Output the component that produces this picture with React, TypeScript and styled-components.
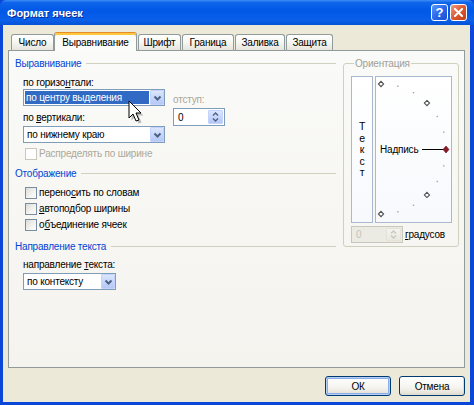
import React from 'react';
import styled, { createGlobalStyle, css } from 'styled-components';

const Global = createGlobalStyle`
  html, body { margin: 0; padding: 0; width: 474px; height: 405px; overflow: hidden; background: #0A46D8; }
  body { font-family: "Liberation Sans", Arial, sans-serif; font-size: 10px; }
  * { box-sizing: border-box; }
`;

const Window = styled.div`
  position: relative;
  width: 474px;
  height: 405px;
  display: flex;
  flex-direction: column;
  background: #0A46D8;
  font-family: "Liberation Sans", Arial, sans-serif;
  font-size: 10px;
  letter-spacing: -0.2px;
  color: #000;
`;

const TitleBar = styled.div`
  height: 25px;
  flex: none;
  display: flex;
  align-items: center;
  padding: 0 7px 0 7px;
  border-radius: 6px 6px 0 0;
  background: linear-gradient(to bottom, #3D8DF5 0%, #1066EA 10%, #0058E6 40%, #0A5FE9 80%, #0452D6 100%);
`;

const Title = styled.div`
  flex: 1;
  color: #fff;
  font-weight: bold;
  font-size: 11px;
  letter-spacing: 0;
  text-shadow: 1px 1px 0 #0C2A9A;
`;

const CapButton = styled.div<{ $kind: 'help' | 'close' }>`
  width: 17px;
  height: 17px;
  margin-left: 2px;
  border: 1px solid #fff;
  border-radius: 3px;
  display: flex;
  align-items: center;
  justify-content: center;
  color: #fff;
  font-weight: bold;
  font-size: 13px;
  letter-spacing: 0;
  ${(p) =>
    p.$kind === 'help'
      ? css`background: linear-gradient(135deg, #5C9AF8 0%, #2A67EC 50%, #1B4FD0 100%);`
      : css`background: linear-gradient(135deg, #EE9B80 0%, #DE5A32 50%, #C23C17 100%);`}
`;

const Body = styled.div`
  flex: 1;
  margin: 0 4px 3px 3px;
  background: #ECE9D8;
  padding: 7px 5px 6px 5px;
  display: flex;
  flex-direction: column;
`;

const TabStrip = styled.div`
  height: 18px;
  flex: none;
  display: flex;
  align-items: flex-end;
  gap: 1px;
  padding-left: 3px;
  position: relative;
  z-index: 1;
`;

const Tab = styled.div<{ $w: number; $active?: boolean }>`
  width: ${(p) => p.$w}px;
  height: 16px;
  border: 1px solid #919B9C;
  border-bottom: none;
  border-radius: 3px 3px 0 0;
  display: flex;
  align-items: center;
  justify-content: center;
  background: linear-gradient(to bottom, #FFFFFF 0%, #F6F6F2 50%, #E6E4DC 100%);
  white-space: nowrap;
  ${(p) =>
    p.$active &&
    css`
      height: 19px;
      margin-bottom: -1px;
      margin-left: -1px;
      border-top: 1px solid #E68B2C;
      box-shadow: inset 0 2px 0 #FFC73C;
      background: #FBFBF9;
      padding-top: 1px;
    `}
`;

const Panel = styled.div`
  height: 318px;
  flex: none;
  border: 1px solid #919B9C;
  background: linear-gradient(to bottom, #FAFAF8 0%, #F4F3EE 100%);
  padding: 6px 0 0 6px;
  display: flex;
  align-items: flex-start;
`;

const LeftCol = styled.div`
  width: 321px;
  display: flex;
  flex-direction: column;
`;

const GroupHeader = styled.div<{ $mt?: number }>`
  display: flex;
  align-items: center;
  height: 13px;
  margin-top: ${(p) => p.$mt ?? 0}px;
  color: #0046D5;
  white-space: nowrap;
  &::after {
    content: '';
    flex: 1;
    height: 1px;
    margin-left: 5px;
    background: #D0D0BF;
  }
`;

const Indent = styled.div`
  margin-left: 8px;
  display: flex;
  flex-direction: column;
`;

const FieldLabel = styled.div<{ $mt?: number; $disabled?: boolean }>`
  height: 13px;
  line-height: 13px;
  margin-top: ${(p) => p.$mt ?? 0}px;
  color: ${(p) => (p.$disabled ? '#ACA899' : '#000')};
  white-space: nowrap;
`;

const U = styled.span`
  text-decoration: underline;
`;

const HAlignRow = styled.div`
  margin-top: 6px;
  display: flex;
  align-items: flex-start;
`;

const Column = styled.div<{ $pt?: number; $ml?: number }>`
  display: flex;
  flex-direction: column;
  padding-top: ${(p) => p.$pt ?? 0}px;
  margin-left: ${(p) => p.$ml ?? 0}px;
`;

const Combo = styled.div<{ $w: number; $mt?: number }>`
  width: ${(p) => p.$w}px;
  height: 17px;
  margin-top: ${(p) => p.$mt ?? 0}px;
  border: 1px solid #7F9DB9;
  background: #fff;
  display: flex;
`;

const ComboValue = styled.div`
  flex: 1;
  padding: 1px;
  display: flex;
  min-width: 0;
`;

const ComboText = styled.div<{ $selected?: boolean }>`
  flex: 1;
  display: flex;
  align-items: center;
  padding-left: ${(p) => (p.$selected ? 1 : 2)}px;
  white-space: nowrap;
  ${(p) =>
    p.$selected &&
    css`
      background: #316AC5;
      color: #fff;
    `}
`;

const DropButton = styled.div`
  width: 14px;
  flex: none;
  border: 1px solid #C3D3FD;
  border-radius: 1px;
  background: linear-gradient(to bottom, #DCE6FC 0%, #C7D6FA 50%, #B5C9F5 100%);
  display: flex;
  align-items: center;
  justify-content: center;
`;

const Spinner = styled.div<{ $disabled?: boolean; $mt?: number }>`
  width: 52px;
  height: ${(p) => (p.$disabled ? 17 : 18)}px;
  margin-top: ${(p) => p.$mt ?? 0}px;
  border: 1px solid ${(p) => (p.$disabled ? '#C9C7BA' : '#7F9DB9')};
  background: ${(p) => (p.$disabled ? '#EBEAE3' : '#fff')};
  display: flex;
  color: ${(p) => (p.$disabled ? '#C6C4B8' : '#000')};
`;

const SpinValue = styled.div`
  flex: 1;
  display: flex;
  align-items: center;
  padding-left: 4px;
`;

const SpinButtons = styled.div<{ $disabled?: boolean }>`
  width: 15px;
  margin: 1px;
  display: flex;
  flex-direction: column;
  border: 1px solid ${(p) => (p.$disabled ? '#E4E2D8' : '#C3D3FD')};
  border-radius: 1px;
  background: ${(p) =>
    p.$disabled
      ? 'linear-gradient(to bottom, #F4F3EE, #E9E8E1)'
      : 'linear-gradient(to bottom, #DCE6FC 0%, #C7D6FA 50%, #B5C9F5 100%)'};
`;

const SpinHalf = styled.div`
  flex: 1;
  display: flex;
  align-items: center;
  justify-content: center;
`;

const CheckRow = styled.div<{ $mt?: number; $disabled?: boolean }>`
  display: flex;
  align-items: center;
  height: 13px;
  margin-top: ${(p) => p.$mt ?? 0}px;
  margin-left: 2px;
  color: ${(p) => (p.$disabled ? '#ACA899' : '#000')};
  white-space: nowrap;
`;

const CheckBox = styled.div<{ $disabled?: boolean }>`
  width: 12px;
  height: 12px;
  margin-right: 2px;
  flex: none;
  border: 1px solid ${(p) => (p.$disabled ? '#CAC8BB' : '#7A8CA2')};
  background: ${(p) => (p.$disabled ? '#fff' : 'linear-gradient(135deg, #DCDCD7 0%, #F3F3F0 60%, #FFFFFF 100%)')};
`;

const OrientGroup = styled.fieldset`
  margin: 0 0 0 7px;
  min-width: 0;
  width: 116px;
  padding: 6px 6px 3px 7px;
  border: 1px solid #D0D0BF;
  border-radius: 3px;
  display: flex;
  flex-direction: column;
`;

const OrientLegend = styled.legend`
  padding: 0 1px;
  margin-left: 3px;
  height: 13px;
  line-height: 13px;
  color: #A09F97;
  font-size: 10px;
`;

const OrientBoxes = styled.div`
  display: flex;
  gap: 2px;
  height: 147px;
`;

const VerticalTextBox = styled.div`
  width: 22px;
  border: 1px solid #A8B8CE;
  background: linear-gradient(to bottom, #FFFFFF 0%, #F7F9FD 100%);
  display: flex;
  flex-direction: column;
  align-items: center;
  justify-content: center;
  padding-top: 1px;
`;

const VLetter = styled.span`
  line-height: 11.5px;
  height: 11.5px;
  font-size: 10.5px;
`;

const DialBox = styled.div`
  width: 77px;
  border: 1px solid #A8B8CE;
  background: linear-gradient(to bottom, #FFFFFF 0%, #F7F9FD 100%);
  display: flex;
`;

const DegreesRow = styled.div`
  margin-top: 3px;
  display: flex;
  align-items: center;
  gap: 2px;
  white-space: nowrap;
`;

const ButtonRow = styled.div`
  margin-top: 8px;
  display: flex;
  justify-content: flex-end;
  gap: 8px;
`;

const DlgButton = styled.div<{ $default?: boolean }>`
  width: 66px;
  height: 20px;
  border: 1px solid #003C74;
  border-radius: 3px;
  display: flex;
  align-items: center;
  justify-content: center;
  background: linear-gradient(to bottom, #FFFFFF 0%, #F5F4EF 60%, #E6E3D9 90%, #D8D3C7 100%);
  box-shadow: ${(p) =>
    p.$default ? 'inset 0 0 0 1px #B7CFF5, inset 0 0 0 2px #8BAEEA' : 'inset -1px -1px 0 #E0DCD0'};
`;

const Cursor = styled.svg`
  position: absolute;
  left: 128px;
  top: 100px;
  pointer-events: none;
`;

const Chevron = ({ color = '#4D6185', up = false, small = false }: { color?: string; up?: boolean; small?: boolean }) => {
  const w = small ? 7 : 9;
  const h = small ? 4 : 6;
  const d = small
    ? up
      ? 'M1 3.5 L3.5 1 L6 3.5'
      : 'M1 0.5 L3.5 3 L6 0.5'
    : 'M1.5 1.5 L4.5 4.5 L7.5 1.5';
  return (
    <svg width={w} height={h} viewBox={`0 0 ${w} ${h}`}>
      <path d={d} fill="none" stroke={color} strokeWidth={small ? 1.4 : 2} />
    </svg>
  );
};

const Dial = () => {
  const cx = 5;
  const cy = 72;
  const r = 65;
  const dots = [75, 60, 30, 15, -15, -30, -60, -75];
  const diamonds = [90, 45, -45, -90];
  const pt = (a: number) => {
    const rad = (a * Math.PI) / 180;
    return [cx + r * Math.cos(rad), cy - r * Math.sin(rad)];
  };
  return (
    <svg width={75} height={145} viewBox="0 0 75 145">
      {dots.map((a) => {
        const [x, y] = pt(a);
        return <rect key={a} x={x - 0.7} y={y - 0.7} width={1.4} height={1.4} fill="#A6A6A6" />;
      })}
      {diamonds.map((a) => {
        const [x, y] = pt(a);
        return (
          <polygon
            key={a}
            points={`${x},${y - 2.6} ${x + 2.6},${y} ${x},${y + 2.6} ${x - 2.6},${y}`}
            fill="#fff"
            stroke="#505050"
            strokeWidth={1.1}
          />
        );
      })}
      <line x1={46} y1={72.5} x2={68} y2={72.5} stroke="#000" strokeWidth={1} />
      <polygon points="70,69 73,72.5 70,76 67,72.5" fill="#8B1A2A" stroke="#6A0F1C" strokeWidth={0.6} />
      <text
        x={4}
        y={76}
        fontFamily='"Liberation Sans", Arial, sans-serif'
        fontSize={10}
        letterSpacing={-0.2}
        fill="#000"
      >
        Надпись
      </text>
    </svg>
  );
};

export default function App() {
  const tabs: { label: string; w: number; active?: boolean }[] = [
    { label: 'Число', w: 43 },
    { label: 'Выравнивание', w: 83, active: true },
    { label: 'Шрифт', w: 43 },
    { label: 'Граница', w: 52 },
    { label: 'Заливка', w: 50 },
    { label: 'Защита', w: 47 },
  ];

  return (
    <>
      <Global />
      <Window>
        <TitleBar>
          <Title>Формат ячеек</Title>
          <CapButton $kind="help">?</CapButton>
          <CapButton $kind="close">
            <svg width={9} height={9} viewBox="0 0 9 9">
              <path d="M1 1 L8 8 M8 1 L1 8" stroke="#fff" strokeWidth={2} strokeLinecap="square" />
            </svg>
          </CapButton>
        </TitleBar>
        <Body>
          <TabStrip>
            {tabs.map((t) => (
              <Tab key={t.label} $w={t.w} $active={t.active}>
                {t.label}
              </Tab>
            ))}
          </TabStrip>
          <Panel>
            <LeftCol>
              <GroupHeader>Выравнивание</GroupHeader>
              <Indent>
                <HAlignRow>
                  <Column>
                    <FieldLabel>
                      по горизо<U>н</U>тали:
                    </FieldLabel>
                    <Combo $w={142}>
                      <ComboValue>
                        <ComboText $selected>по центру выделения</ComboText>
                      </ComboValue>
                      <DropButton>
                        <Chevron />
                      </DropButton>
                    </Combo>
                    <FieldLabel $mt={5}>
                      по <U>в</U>ертикали:
                    </FieldLabel>
                    <Combo $w={142} $mt={2}>
                      <ComboValue>
                        <ComboText>по нижнему краю</ComboText>
                      </ComboValue>
                      <DropButton>
                        <Chevron />
                      </DropButton>
                    </Combo>
                  </Column>
                  <Column $pt={17} $ml={8}>
                    <FieldLabel $disabled>отступ:</FieldLabel>
                    <Spinner $mt={2}>
                      <SpinValue>0</SpinValue>
                      <SpinButtons>
                        <SpinHalf>
                          <Chevron up small />
                        </SpinHalf>
                        <SpinHalf>
                          <Chevron small />
                        </SpinHalf>
                      </SpinButtons>
                    </Spinner>
                  </Column>
                </HAlignRow>
                <CheckRow $mt={4} $disabled>
                  <CheckBox $disabled />
                  Распределять по ширине
                </CheckRow>
              </Indent>

              <GroupHeader $mt={7}>Отображение</GroupHeader>
              <Indent>
                <CheckRow $mt={6}>
                  <CheckBox />
                  перено<U>с</U>ить по словам
                </CheckRow>
                <CheckRow $mt={3}>
                  <CheckBox />
                  <U>а</U>втоподбор ширины
                </CheckRow>
                <CheckRow $mt={3}>
                  <CheckBox />
                  о<U>б</U>ъединение ячеек
                </CheckRow>
              </Indent>

              <GroupHeader $mt={9}>Направление текста</GroupHeader>
              <Indent>
                <FieldLabel $mt={5}>
                  направление <U>т</U>екста:
                </FieldLabel>
                <Combo $w={93} $mt={2}>
                  <ComboValue>
                    <ComboText>по контексту</ComboText>
                  </ComboValue>
                  <DropButton>
                    <Chevron />
                  </DropButton>
                </Combo>
              </Indent>
            </LeftCol>

            <OrientGroup>
              <OrientLegend>Ориентация</OrientLegend>
              <OrientBoxes>
                <VerticalTextBox>
                  {['Т', 'е', 'к', 'с', 'т'].map((ch, i) => (
                    <VLetter key={i}>{ch}</VLetter>
                  ))}
                </VerticalTextBox>
                <DialBox>
                  <Dial />
                </DialBox>
              </OrientBoxes>
              <DegreesRow>
                <Spinner $disabled>
                  <SpinValue>0</SpinValue>
                  <SpinButtons $disabled>
                    <SpinHalf>
                      <Chevron up small color="#C8C7BE" />
                    </SpinHalf>
                    <SpinHalf>
                      <Chevron small color="#C8C7BE" />
                    </SpinHalf>
                  </SpinButtons>
                </Spinner>
                <span>
                  <U>г</U>радусов
                </span>
              </DegreesRow>
            </OrientGroup>
          </Panel>
          <ButtonRow>
            <DlgButton $default>ОК</DlgButton>
            <DlgButton>Отмена</DlgButton>
          </ButtonRow>
        </Body>
        <Cursor width={16} height={24} viewBox="0 0 16 24">
          <path d="M2 2 L2 19 L6 15 L9 22 L12 21 L9 14 L14 14 Z" fill="rgba(0,0,0,0.25)" transform="translate(1.5,1.5)" />
          <path d="M1 1 L1 18 L5 14 L8 21 L11 20 L8 13 L13 13 Z" fill="#fff" stroke="#000" strokeWidth={1} strokeLinejoin="miter" />
        </Cursor>
      </Window>
    </>
  );
}
